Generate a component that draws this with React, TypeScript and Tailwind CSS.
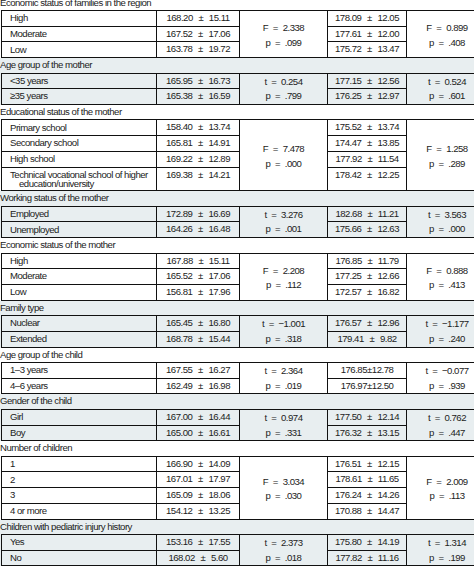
import React from "react";

type Row = { label: string; a: string; b: string; tall?: boolean };
type Section = {
  title: string;
  shaded: boolean;
  rows: Row[];
  s1: [string, string];
  s2: [string, string];
};

const sections: Section[] = [
  {
    title: "Economic status of families in the region",
    shaded: false,
    rows: [
      { label: "High", a: "168.20 ± 15.11", b: "178.09 ± 12.05" },
      { label: "Moderate", a: "167.52 ± 17.06", b: "177.61 ± 12.00" },
      { label: "Low", a: "163.78 ± 19.72", b: "175.72 ± 13.47" },
    ],
    s1: ["F = 2.338", "p = .099"],
    s2: ["F = 0.899", "p = .408"],
  },
  {
    title: "Age group of the mother",
    shaded: true,
    rows: [
      { label: "<35 years", a: "165.95 ± 16.73", b: "177.15 ± 12.56" },
      { label: "≥35 years", a: "165.38 ± 16.59", b: "176.25 ± 12.97" },
    ],
    s1: ["t = 0.254", "p = .799"],
    s2: ["t = 0.524", "p = .601"],
  },
  {
    title: "Educational status of the mother",
    shaded: false,
    rows: [
      { label: "Primary school", a: "158.40 ± 13.74", b: "175.52 ± 13.74" },
      { label: "Secondary school", a: "165.81 ± 14.91", b: "174.47 ± 13.85" },
      { label: "High school", a: "169.22 ± 12.89", b: "177.92 ± 11.54" },
      {
        label: "Technical vocational school of higher education/university",
        a: "169.38 ± 14.21",
        b: "178.42 ± 12.25",
        tall: true,
      },
    ],
    s1: ["F = 7.478", "p = .000"],
    s2: ["F = 1.258", "p = .289"],
  },
  {
    title: "Working status of the mother",
    shaded: true,
    rows: [
      { label: "Employed", a: "172.89 ± 16.69", b: "182.68 ± 11.21" },
      { label: "Unemployed", a: "164.26 ± 16.48", b: "175.66 ± 12.63" },
    ],
    s1: ["t = 3.276", "p = .001"],
    s2: ["t = 3.563", "p = .000"],
  },
  {
    title: "Economic status of the mother",
    shaded: false,
    rows: [
      { label: "High", a: "167.88 ± 15.11", b: "176.85 ± 11.79" },
      { label: "Moderate", a: "165.52 ± 17.06", b: "177.25 ± 12.66" },
      { label: "Low", a: "156.81 ± 17.96", b: "172.57 ± 16.82" },
    ],
    s1: ["F = 2.208", "p = .112"],
    s2: ["F = 0.888", "p = .413"],
  },
  {
    title: "Family type",
    shaded: true,
    rows: [
      { label: "Nuclear", a: "165.45 ± 16.80", b: "176.57 ± 12.96" },
      { label: "Extended", a: "168.78 ± 15.44", b: "179.41 ± 9.82" },
    ],
    s1: ["t = −1.001", "p = .318"],
    s2: ["t = −1.177", "p = .240"],
  },
  {
    title: "Age group of the child",
    shaded: false,
    rows: [
      { label: "1–3 years", a: "167.55 ± 16.27", b: "176.85±12.78" },
      { label: "4–6 years", a: "162.49 ± 16.98", b: "176.97±12.50" },
    ],
    s1: ["t = 2.364", "p = .019"],
    s2: ["t = −0.077", "p = .939"],
  },
  {
    title: "Gender of the child",
    shaded: true,
    rows: [
      { label: "Girl", a: "167.00 ± 16.44", b: "177.50 ± 12.14" },
      { label: "Boy", a: "165.00 ± 16.61", b: "176.32 ± 13.15" },
    ],
    s1: ["t = 0.974", "p = .331"],
    s2: ["t = 0.762", "p = .447"],
  },
  {
    title: "Number of children",
    shaded: false,
    rows: [
      { label: "1", a: "166.90 ± 14.09", b: "176.51 ± 12.15" },
      { label: "2", a: "167.01 ± 17.97", b: "178.61 ± 11.65" },
      { label: "3", a: "165.09 ± 18.06", b: "176.24 ± 14.26" },
      { label: "4 or more", a: "154.12 ± 13.25", b: "170.88 ± 14.47" },
    ],
    s1: ["F = 3.034", "p = .030"],
    s2: ["F = 2.009", "p = .113"],
  },
  {
    title: "Children with pediatric injury history",
    shaded: true,
    rows: [
      { label: "Yes", a: "153.16 ± 17.55", b: "175.80 ± 14.19" },
      { label: "No", a: "168.02 ± 5.60", b: "177.82 ± 11.16" },
    ],
    s1: ["t = 2.373", "p = .018"],
    s2: ["t = 1.314", "p = .199"],
  },
];

const spans: Record<number, string> = {
  2: "row-span-2",
  3: "row-span-3",
  4: "row-span-4",
};

const line = "border-[#111]";

function StatCell({ lines, n, col }: { lines: [string, string]; n: number; col: string }) {
  // two-row groups put one line per row, taller groups stack them in the middle
  const lead = n === 2 ? "leading-[14.6px] pt-[1px]" : "leading-[14.5px] pt-[3px]";
  return (
    <div
      className={`${spans[n]} ${col} row-start-1 border-r border-b ${line} ${lead} flex flex-col items-center justify-center [word-spacing:2.5px] whitespace-nowrap`}
    >
      <span>{lines[0]}</span>
      <span>{lines[1]}</span>
    </div>
  );
}

function TableSection({ s }: { s: Section }) {
  const bg = s.shaded ? "bg-[#e8eef0]" : "bg-white";
  const n = s.rows.length;
  return (
    <div className={bg}>
      <div className="h-[14.5px] flex items-center whitespace-nowrap">{s.title}</div>
      <div className={`ml-[1px] w-max border-l border-t ${line} grid grid-cols-[155px_83px_88px_79px_81px]`}>
        <StatCell lines={s.s1} n={n} col="col-start-3" />
        <StatCell lines={s.s2} n={n} col="col-start-5" />
        {s.rows.map((r, i) => (
          <React.Fragment key={i}>
            {r.tall ? (
              <div className={`col-start-1 h-[23.7px] border-r border-b ${line} pt-[2px] pl-[17px] -indent-[9px] leading-[9px]`}>
                {r.label}
              </div>
            ) : (
              <div className={`col-start-1 h-[15.7px] border-r border-b ${line} flex items-center pl-[8px] whitespace-nowrap`}>
                {r.label}
              </div>
            )}
            <div
              className={`col-start-2 ${r.tall ? "h-[23.7px]" : "h-[15.7px]"} border-r border-b ${line} text-center leading-[14.7px] [word-spacing:3.5px] whitespace-nowrap`}
            >
              {r.a}
            </div>
            <div
              className={`col-start-4 ${r.tall ? "h-[23.7px]" : "h-[15.7px]"} border-r border-b ${line} text-center leading-[14.7px] [word-spacing:3.5px] whitespace-nowrap`}
            >
              {r.b}
            </div>
          </React.Fragment>
        ))}
      </div>
    </div>
  );
}

export default function App() {
  return (
    <div
      className="w-[474px] h-[567px] overflow-hidden bg-white text-[9.6px] tracking-[-0.5px] text-[#222]"
      style={{ fontFamily: '"Liberation Sans Narrow", "Liberation Sans", Arial, sans-serif' }}
    >
      <div className="w-[490px] -mt-[4.5px]">
        {sections.map((s) => (
          <TableSection key={s.title} s={s} />
        ))}
      </div>
    </div>
  );
}
